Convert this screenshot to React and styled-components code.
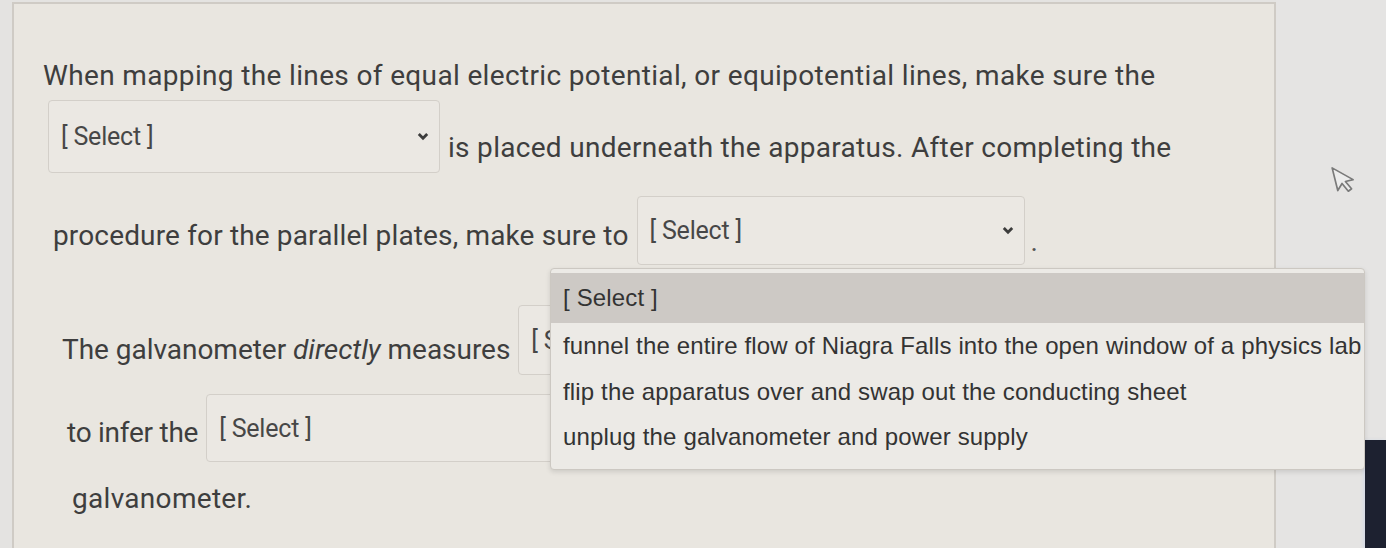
import React from "react";
import styled, { createGlobalStyle } from "styled-components";

const Global = createGlobalStyle`
  html, body { margin: 0; padding: 0; }
  body {
    background: #e4e3e1;
    font-family: Roboto, "Liberation Sans", Arial, sans-serif;
    overflow: hidden;
  }
`;

const Page = styled.div`
  display: flex;
  width: 1386px;
  height: 548px;
  background: #e4e3e1;
`;

const Card = styled.div`
  position: relative;
  width: 1264px;
  margin: 2px 0 0 12px;
  border: 2px solid #cfcbc5;
  border-bottom: none;
  background: #e9e6e0;
  box-sizing: border-box;
  padding-top: 56px;
`;

const Side = styled.div`
  position: relative;
  flex: 1;
  background: #e5e4e3;
`;

const Question = styled.div`
  display: flex;
  flex-direction: column;
`;

const Line = styled.div`
  display: flex;
  align-items: flex-start;
  gap: 8px;
  padding-left: ${(p) => p.$indent}px;
  margin-top: ${(p) => p.$gap || 0}px;
`;

const Text = styled.span`
  font-family: Roboto, sans-serif;
  font-size: 28px;
  letter-spacing: ${(p) => (p.$ls !== undefined ? p.$ls : 0.3)}px;
  line-height: 32px;
  color: #3e3e3e;
  white-space: nowrap;
  margin-top: ${(p) => p.$offset || 0}px;
  em { font-style: italic; }
`;

const SelectBox = styled.div`
  display: flex;
  align-items: center;
  justify-content: space-between;
  box-sizing: border-box;
  width: ${(p) => p.$w}px;
  height: ${(p) => p.$h}px;
  padding: 0 10px 0 12px;
  border: 1.5px solid #d3cfc9;
  border-radius: 4px;
  background: #ebe8e3;
  flex-shrink: 0;
`;

const SelectLabel = styled.span`
  font-family: Roboto, sans-serif;
  font-size: 25px;
  color: #474747;
  letter-spacing: -0.2px;
  white-space: nowrap;
`;

const Chevron = () => (
  <svg width="12" height="9" viewBox="0 0 12 9">
    <path d="M1.8 2 L6 6.3 L10.2 2" fill="none" stroke="#3c3c3c" strokeWidth="2.8" />
  </svg>
);

const Period = styled.span`
  font-family: Roboto, sans-serif;
  font-size: 28px;
  line-height: 32px;
  color: #555;
  margin: 30px 0 0 -2px;
`;

const Dropdown = styled.div`
  position: absolute;
  z-index: 10;
  left: 536px;
  top: 264px;
  width: 815px;
  height: 202px;
  box-sizing: border-box;
  padding: 4px 0 10px;
  background: #eceae6;
  border: 1.5px solid #ccc8c2;
  border-radius: 4px;
  box-shadow: 0 2px 5px rgba(0, 0, 0, 0.12);
  display: flex;
  flex-direction: column;
`;

const Option = styled.div`
  display: flex;
  align-items: center;
  height: ${(p) => p.$h}px;
  padding-left: 12px;
  background: ${(p) => (p.$active ? "#cdc9c5" : "transparent")};
  font-family: "Liberation Sans", Arial, sans-serif;
  font-size: 24px;
  letter-spacing: 0.15px;
  color: #333;
  white-space: nowrap;
`;

const Cursor = styled.svg`
  position: absolute;
  left: 56px;
  top: 163px;
  transform: rotate(-14deg);
`;

const DarkEdge = styled.div`
  position: absolute;
  right: 0;
  bottom: 0;
  width: 21px;
  height: 108px;
  background: #1d2130;
  box-shadow: -2px 0 3px rgba(200, 210, 230, 0.6);
`;

export default function App() {
  return (
    <>
      <Global />
      <Page>
        <Card>
          <Question>
            <Line $indent={29}>
              <Text $ls={0.35}>
                When mapping the lines of equal electric potential, or equipotential lines, make sure the
              </Text>
            </Line>
            <Line $indent={34} $gap={8}>
              <SelectBox $w={392} $h={73}>
                <SelectLabel>[ Select ]</SelectLabel>
                <Chevron />
              </SelectBox>
              <Text $offset={32}>is placed underneath the apparatus. After completing the</Text>
            </Line>
            <Line $indent={39} $gap={23}>
              <Text $offset={24} $ls={0.15}>
                procedure for the parallel plates, make sure to
              </Text>
              <SelectBox $w={388} $h={69}>
                <SelectLabel>[ Select ]</SelectLabel>
                <Chevron />
              </SelectBox>
              <Period>.</Period>
            </Line>
            <Line $indent={48} $gap={40}>
              <Text $offset={29} $ls={-0.03}>
                The galvanometer <em>directly</em> measures
              </Text>
              <SelectBox $w={390} $h={70}>
                <SelectLabel>[ Select ]</SelectLabel>
                <Chevron />
              </SelectBox>
            </Line>
            <Line $indent={53} $gap={19}>
              <Text $offset={23} $ls={-0.25}>
                to infer the
              </Text>
              <SelectBox $w={390} $h={68}>
                <SelectLabel>[ Select ]</SelectLabel>
                <Chevron />
              </SelectBox>
            </Line>
            <Line $indent={58} $gap={21}>
              <Text>galvanometer.</Text>
            </Line>
          </Question>
          <Dropdown>
            <Option $h={50} $active>
              [ Select ]
            </Option>
            <Option $h={46}>funnel the entire flow of Niagra Falls into the open window of a physics lab</Option>
            <Option $h={45}>flip the apparatus over and swap out the conducting sheet</Option>
            <Option $h={45}>unplug the galvanometer and power supply</Option>
          </Dropdown>
        </Card>
        <Side>
          <Cursor width="26" height="34" viewBox="0 0 24 32">
            <path
              d="M3 2 L3 24 L8.5 18.5 L12.5 27 L16 25.5 L12 17.5 L19.5 17.5 Z"
              fill="#ececec"
              stroke="#7a7a7a"
              strokeWidth="1.6"
              strokeLinejoin="round"
            />
          </Cursor>
          <DarkEdge />
        </Side>
      </Page>
    </>
  );
}
